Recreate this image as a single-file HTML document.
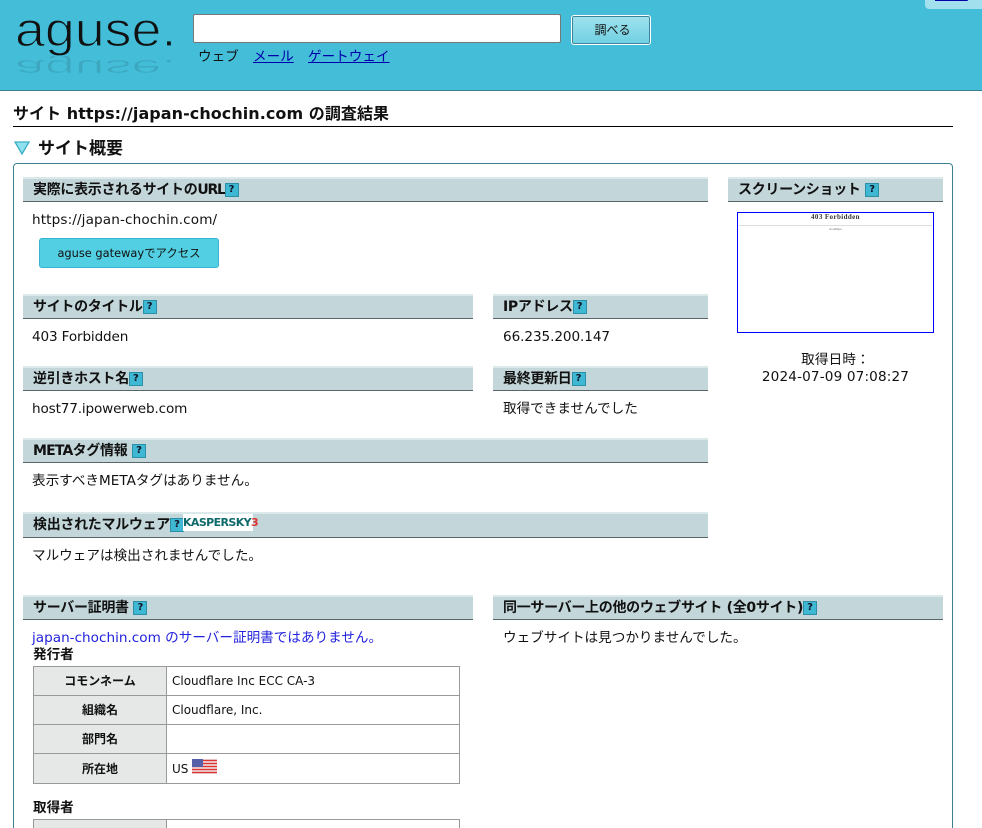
<!DOCTYPE html>
<html lang="ja"><head><meta charset="utf-8"><title>aguse</title>
<style>
html,body{margin:0;padding:0;background:#fff;width:982px;height:828px;overflow:hidden;}
#w{width:982px;height:828px;overflow:hidden;position:relative;font:13.6px/20px "DejaVu Sans","Noto Sans CJK JP",sans-serif;color:#111;}
.a{position:absolute;white-space:nowrap;}
.h{position:absolute;height:22px;border-top:2px solid #dbe9ea;border-bottom:1px solid #5a6568;background:#c3d6da;font-weight:bold;font-size:14px;line-height:22px;box-sizing:content-box;white-space:nowrap;padding-left:10px;letter-spacing:-.3px;}
.q{display:inline-block;width:12px;height:12px;background:#3fb8d4;border:1px solid #2c8fa8;color:#112;font:bold 10px/12px "DejaVu Sans",sans-serif;text-align:center;vertical-align:2px;letter-spacing:0;}
table{position:absolute;border-collapse:collapse;font-size:12px;}
td,th{border:1px solid #999;height:29px;padding:0;box-sizing:border-box;}
th{background:#e6e8e8;width:133px;font-weight:bold;text-align:center;}
td{width:293px;padding-left:5px;}
</style></head><body><div id="w">
<div class="a" style="left:0;top:0;width:982px;height:90px;background:#43bdd8;border-bottom:1px solid #3d7f8c;"></div>
<div class="a" style="left:925px;top:0;width:57px;height:9px;background:#a3e0ee;border-radius:0 0 0 4px;"></div>
<div class="a" style="left:935px;top:-11px;font-size:11px;line-height:14px;"><a style="color:#00a;text-decoration:underline;">ページ</a></div>
<svg class="a" style="left:10px;top:0" width="180" height="90">
<g opacity=".12" transform="translate(5,60) scale(1.12,-.5)"><text x="0" y="0" font-family="Liberation Sans, sans-serif" font-size="48" fill="#111" stroke="#43bdd8" stroke-width="1.2">aguse.</text></g>
<g transform="translate(5,46) scale(1.12,1)"><text x="0" y="0" font-family="Liberation Sans, sans-serif" font-size="48" fill="#111" stroke="#43bdd8" stroke-width="1.2">aguse.</text></g>
</svg>
<div class="a" style="left:193px;top:14px;width:368px;height:29px;box-sizing:border-box;background:#fff;border:1px solid #777;border-radius:2px;"></div>
<div class="a" style="left:571px;top:15px;width:80px;height:30px;box-sizing:border-box;border:1px solid #fff;border-radius:3px;background:linear-gradient(#a0e2ee,#6fd0e2);box-shadow:inset 0 0 0 1px #3b8799;text-align:center;font-size:12px;line-height:28px;padding-left:3px;">調べる</div>
<div class="a" style="left:198px;top:47px;">ウェブ</div>
<a class="a" style="left:253px;top:47px;color:#00a;text-decoration:underline;">メール</a>
<a class="a" style="left:308px;top:47px;color:#00a;text-decoration:underline;">ゲートウェイ</a>

<div class="a" style="left:13px;top:103px;width:940px;height:23px;border-bottom:1px solid #000;font-size:16px;font-weight:bold;line-height:21px;letter-spacing:.05px;">サイト https://japan-chochin.com の調査結果</div>
<svg class="a" style="left:14px;top:141px" width="16" height="14"><path d="M1 1H15L8 13Z" fill="#8fe2ee" stroke="#3aaec4" stroke-width="1.3"/></svg>
<div class="a" style="left:38px;top:139px;font-size:17px;font-weight:bold;line-height:20px;">サイト概要</div>
<div class="a" style="left:13px;top:163px;width:940px;height:700px;box-sizing:border-box;border:1px solid #3b8090;border-radius:4px;"></div>

<div class="h" style="left:23px;top:177px;width:675px;">実際に表示されるサイトの<span style="letter-spacing:-1.3px">URL</span><span class="q">?</span></div>
<div class="a" style="left:32px;top:210px;letter-spacing:.12px;">https://japan-chochin.com/</div>
<div class="a" style="left:39px;top:238px;width:180px;height:30px;box-sizing:border-box;background:#52cfe3;border:1px solid #35b3d0;border-radius:3px;text-align:center;font-size:11.4px;line-height:28px;">aguse gatewayでアクセス</div>

<div class="h" style="left:728px;top:177px;width:205px;">スクリーンショット <span class="q">?</span></div>
<div class="a" style="left:737px;top:212px;width:197px;height:121px;box-sizing:border-box;border:1px solid #00f;background:#fff;">
<div style="text-align:center;font:bold 7px/9px 'Liberation Serif',serif;letter-spacing:.4px;color:#333;">403 Forbidden</div>
<div style="border-top:1px solid #ddd;margin:3px 1px 0;text-align:center;font:3px/6px 'Liberation Sans',sans-serif;color:#777;">cloudflare</div>
</div>
<div class="a" style="left:728px;top:352px;width:215px;text-align:center;line-height:17px;letter-spacing:.15px;">取得日時：<br>2024-07-09 07:08:27</div>

<div class="h" style="left:23px;top:294px;width:440px;">サイトのタイトル<span class="q">?</span></div>
<div class="a" style="left:32px;top:327px;letter-spacing:-.15px;">403 Forbidden</div>
<div class="h" style="left:493px;top:294px;width:205px;">IPアドレス<span class="q">?</span></div>
<div class="a" style="left:503px;top:327px;letter-spacing:-.08px;">66.235.200.147</div>

<div class="h" style="left:23px;top:366px;width:440px;">逆引きホスト名<span class="q">?</span></div>
<div class="a" style="left:32px;top:399px;letter-spacing:-.15px;">host77.ipowerweb.com</div>
<div class="h" style="left:493px;top:366px;width:205px;">最終更新日<span class="q">?</span></div>
<div class="a" style="left:503px;top:399px;">取得できませんでした</div>

<div class="h" style="left:23px;top:438px;width:675px;"><span style="letter-spacing:-.8px">META</span>タグ情報 <span class="q">?</span></div>
<div class="a" style="left:32px;top:471px;">表示すべきMETAタグはありません。</div>

<div class="h" style="left:23px;top:512px;width:675px;height:23px;">検出されたマルウェア<span class="q">?</span></div>
<div class="a" style="left:183px;top:514px;width:70px;height:17px;background:#fff;color:#0e6a6a;font:bold 11px/17px 'DejaVu Sans',sans-serif;letter-spacing:-.6px;">KASPERSKY<span style="color:#d33">3</span></div>
<div class="a" style="left:32px;top:546px;">マルウェアは検出されませんでした。</div>

<div class="h" style="left:23px;top:595px;width:440px;">サーバー証明書 <span class="q">?</span></div>
<div class="a" style="left:32px;top:628px;color:#22d;">japan-chochin.com のサーバー証明書ではありません。</div>
<div class="a" style="left:33px;top:645px;font-weight:bold;font-size:13.6px;">発行者</div>
<table style="left:33px;top:666px;">
<tr><th>コモンネーム</th><td>Cloudflare Inc ECC CA-3</td></tr>
<tr><th>組織名</th><td>Cloudflare, Inc.</td></tr>
<tr><th>部門名</th><td></td></tr>
<tr><th style="height:30px">所在地</th><td>US <svg width="25" height="15" style="vertical-align:-1px"><rect width="25" height="15" fill="#eee"/><path d="M0 1.5H25M0 4.5H25M0 7.5H25M0 10.5H25M0 13.5H25" stroke="#d33" stroke-width="1.5"/><rect width="11" height="8" fill="#5560a8"/></svg></td></tr>
</table>
<div class="a" style="left:33px;top:798px;font-weight:bold;font-size:13.6px;">取得者</div>
<table style="left:33px;top:819px;"><tr><th></th><td></td></tr></table>

<div class="h" style="left:493px;top:595px;width:440px;">同一サーバー上の他のウェブサイト (全0サイト)<span class="q">?</span></div>
<div class="a" style="left:503px;top:628px;">ウェブサイトは見つかりませんでした。</div>
</div></body></html>
